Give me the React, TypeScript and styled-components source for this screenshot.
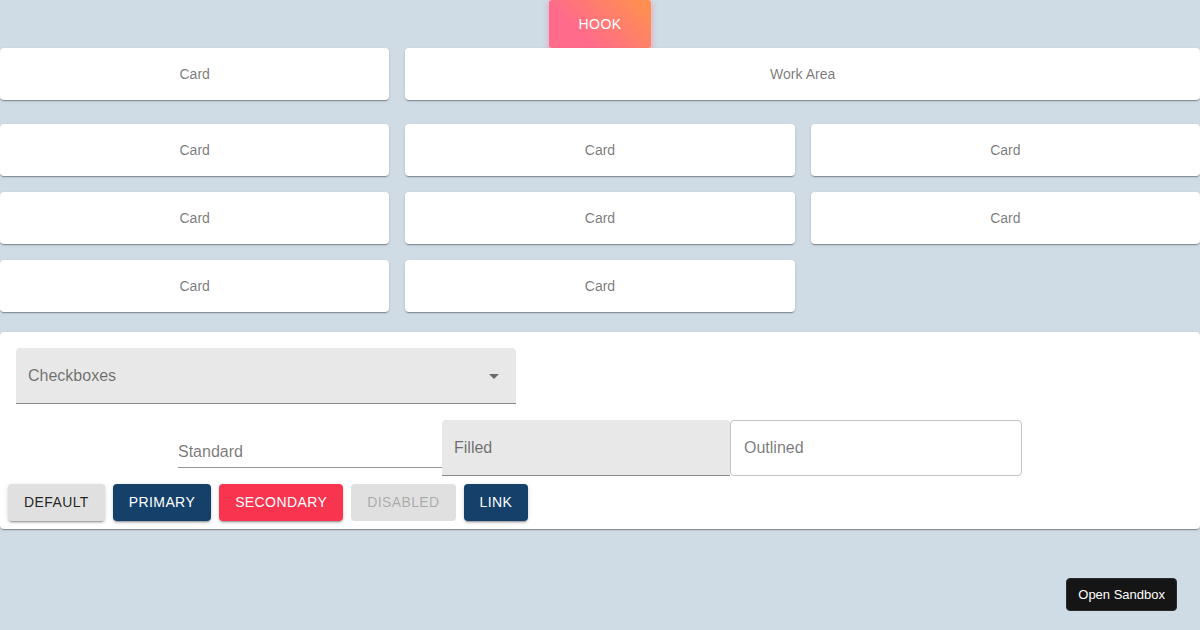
import { createGlobalStyle, styled } from "styled-components"

const GlobalStyle = createGlobalStyle`
    html, body {
        margin: 0;
        padding: 0;
        background: #cfdbe5;
        font-family: "Liberation Sans", Arial, Helvetica, sans-serif;
        height: 100%;
    }
    * { box-sizing: border-box; }
`

const Page = styled.div`
    display: flex;
    flex-flow: column nowrap;
    min-height: 630px;
`

const HookBar = styled.div`
    display: flex;
    justify-content: center;
`

const HookButton = styled.button`
    background: linear-gradient(45deg, #FE6B8B 30%, #FF8E53 90%);
    border: 0;
    border-radius: 3px;
    box-shadow: 0 3px 5px 2px rgba(255, 105, 135, .3);
    color: #fff;
    height: 48px;
    padding: 0 30px;
    font-family: "Liberation Sans", Arial, sans-serif;
    font-size: 14px;
    letter-spacing: .02857em;
    text-transform: uppercase;
`

const CardGrid = styled.div<{ $top?: number }>`
    display: grid;
    grid-template-columns: repeat(3, 1fr);
    gap: 16px;
    margin-top: ${p => p.$top ?? 0}px;
`

const Card = styled.div<{ $span?: number }>`
    grid-column: span ${p => p.$span ?? 1};
    height: 52px;
    background: #fff;
    border-radius: 4px;
    box-shadow: 0px 2px 1px -1px rgba(0,0,0,0.2), 0px 1px 1px 0px rgba(0,0,0,0.14), 0px 1px 3px 0px rgba(0,0,0,0.12);
    display: flex;
    align-items: center;
    justify-content: center;
    color: rgba(0,0,0,0.54);
    font-size: 14px;
`

const Panel = styled.div`
    margin-top: 20px;
    background: #fff;
    border-radius: 4px;
    box-shadow: 0px 2px 1px -1px rgba(0,0,0,0.2), 0px 1px 1px 0px rgba(0,0,0,0.14), 0px 1px 3px 0px rgba(0,0,0,0.12);
    padding: 16px 0 8px;
`

const Select = styled.div`
    margin: 0 16px;
    width: 500px;
    height: 56px;
    background: #e8e8e8;
    border-radius: 4px 4px 0 0;
    border-bottom: 1px solid rgba(0,0,0,0.42);
    display: flex;
    align-items: center;
    justify-content: space-between;
    padding: 0 10px 0 12px;
    color: rgba(0,0,0,0.54);
    font-size: 16px;

    svg {
        width: 24px;
        height: 24px;
        fill: rgba(0,0,0,0.54);
    }
`

const FieldRow = styled.div`
    display: flex;
    justify-content: center;
    align-items: flex-start;
    margin-top: 16px;
`

const Label = styled.span`
    color: rgba(0,0,0,0.54);
    font-size: 16px;
`

const StandardField = styled.div`
    width: 264px;
    height: 48px;
    display: flex;
    align-items: flex-end;
    padding-bottom: 6px;
    border-bottom: 1px solid rgba(0,0,0,0.42);
`

const FilledField = styled.div`
    width: 288px;
    height: 56px;
    background: #e8e8e8;
    border-radius: 4px 4px 0 0;
    border-bottom: 1px solid rgba(0,0,0,0.42);
    display: flex;
    align-items: center;
    padding: 0 12px;
`

const OutlinedField = styled.div`
    width: 292px;
    height: 56px;
    border: 1px solid rgba(0,0,0,0.23);
    border-radius: 4px;
    display: flex;
    align-items: center;
    padding: 0 13px;
`

const ButtonRow = styled.div`
    display: flex;
    gap: 8px;
    margin-top: 8px;
    padding: 0 8px;
`

const variants = {
    default: { bg: "#e0e0e0", fg: "rgba(0,0,0,0.87)", shadow: true },
    primary: { bg: "#15406a", fg: "#fff", shadow: true },
    secondary: { bg: "#f9344f", fg: "#fff", shadow: true },
    disabled: { bg: "#e0e0e0", fg: "rgba(0,0,0,0.26)", shadow: false },
}

const Button = styled.button<{ $variant: keyof typeof variants }>`
    height: 37px;
    padding: 0 16px 2px;
    border: 0;
    border-radius: 4px;
    background: ${p => variants[p.$variant].bg};
    color: ${p => variants[p.$variant].fg};
    box-shadow: ${p => variants[p.$variant].shadow
        ? "0px 3px 1px -2px rgba(0,0,0,0.2), 0px 2px 2px 0px rgba(0,0,0,0.14), 0px 1px 5px 0px rgba(0,0,0,0.12)"
        : "none"};
    font-family: "Liberation Sans", Arial, sans-serif;
    font-size: 14px;
    font-weight: 400;
    letter-spacing: .02857em;
    text-transform: uppercase;
`

const SandboxButton = styled.button`
    position: fixed;
    right: 23px;
    bottom: 19px;
    height: 33px;
    padding: 0 11px;
    background: #151515;
    color: #fff;
    border: 1px solid #2a2a2a;
    border-radius: 4px;
    font-family: "Liberation Sans", Arial, sans-serif;
    font-size: 13px;
`

const rows = [3, 3, 2]

function App() {
    return (
        <>
            <GlobalStyle />
            <Page>
                <HookBar>
                    <HookButton>Hook</HookButton>
                </HookBar>
                <CardGrid>
                    <Card>Card</Card>
                    <Card $span={2}>Work Area</Card>
                </CardGrid>
                <CardGrid $top={24}>
                    {rows.flatMap((n, r) =>
                        Array.from({ length: n }, (_, i) => <Card key={`${r}-${i}`}>Card</Card>)
                    )}
                </CardGrid>
                <Panel>
                    <Select>
                        <span>Checkboxes</span>
                        <svg viewBox="0 0 24 24"><path d="M7 10l5 5 5-5z" /></svg>
                    </Select>
                    <FieldRow>
                        <StandardField><Label>Standard</Label></StandardField>
                        <FilledField><Label>Filled</Label></FilledField>
                        <OutlinedField><Label>Outlined</Label></OutlinedField>
                    </FieldRow>
                    <ButtonRow>
                        <Button $variant="default">Default</Button>
                        <Button $variant="primary">Primary</Button>
                        <Button $variant="secondary">Secondary</Button>
                        <Button $variant="disabled" disabled>Disabled</Button>
                        <Button $variant="primary">Link</Button>
                    </ButtonRow>
                </Panel>
            </Page>
            <SandboxButton>Open Sandbox</SandboxButton>
        </>
    )
}

export default App
